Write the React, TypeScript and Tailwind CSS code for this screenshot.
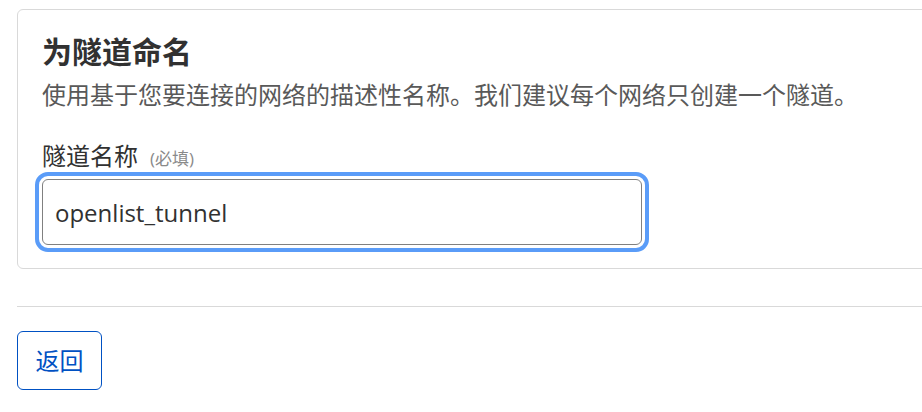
export default function App() {
  return (
    <div
      className="w-[922px] h-[412px] overflow-hidden bg-white text-[#313131]"
      style={{ fontFamily: '"Open Sans", "Noto Sans CJK SC", sans-serif' }}
    >
      <div className="w-[1200px] pl-[17px] pt-[9px]">
        {/* Card */}
        <div className="rounded-[6px] border border-[#d9d9d9] pl-6 pt-[24px] pb-[23px]">
          <h2 className="text-[30px] leading-[36px] font-bold text-[#313131]">为隧道命名</h2>
          <p className="mt-[9px] text-[24px] leading-[32px] text-[#595959]">
            使用基于您要连接的网络的描述性名称。我们建议每个网络只创建一个隧道。
          </p>
          <label className="mt-[29px] block text-[24px] leading-[32px] text-[#313131]">
            隧道名称
            <span className="ml-3 text-[17px] leading-none text-[#8a8a8a]">(必填)</span>
          </label>
          <input
            defaultValue="openlist_tunnel"
            className="mt-[7px] block w-[600px] h-[66px] rounded-[6px] border border-[#808080] px-3 text-[24px] text-[#313131] outline-[4px] outline-offset-[3px] outline-[#5a9cf8] outline-solid"
          />
        </div>

        <div className="mt-[37px] border-t border-[#d9d9d9]" />

        <button className="mt-[24px] w-[85px] h-[59px] rounded-[6px] border border-[#0051c3] text-[24px] text-[#0051c3] bg-white">
          返回
        </button>
      </div>
    </div>
  );
}
